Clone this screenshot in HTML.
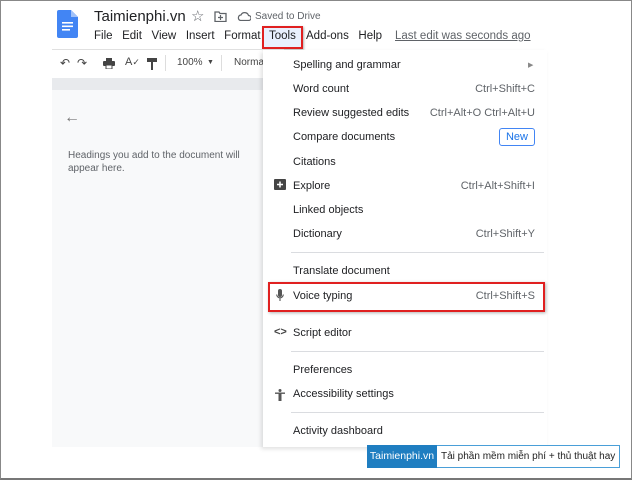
<!DOCTYPE html>
<html><head><meta charset="utf-8"><style>
*{margin:0;padding:0;box-sizing:border-box}
body{width:632px;height:480px;overflow:hidden;background:#fff;font-family:"Liberation Sans",Arial,sans-serif;position:relative;color:#202124}
.a{position:absolute;white-space:nowrap}
.mi{position:absolute;left:293px;font-size:11px;color:#202124;margin-top:1px}
.sc{position:absolute;right:97px;font-size:11px;color:#5f6368;margin-top:1px}
.hr{position:absolute;left:291px;width:253px;height:1px;background:#dadce0}
</style></head><body>
<div class="a" style="left:0;top:0;width:632px;height:480px;border:1px solid #888;border-bottom:2px solid #777"></div>
<svg class="a" style="left:57px;top:10px" width="21" height="28" viewBox="0 0 21 28"><path d="M2 0h12l7 7v19a2 2 0 0 1-2 2H2a2 2 0 0 1-2-2V2a2 2 0 0 1 2-2z" fill="#4285f4"/><path d="M14 0v7h7z" fill="#a1c2fa"/><rect x="5" y="12" width="11" height="1.6" fill="#fff"/><rect x="5" y="15.5" width="11" height="1.6" fill="#fff"/><rect x="5" y="19" width="8" height="1.6" fill="#fff"/></svg>
<div class="a" style="left:94px;top:8px;font-size:15px">Taimienphi.vn</div>
<div class="a" style="left:191px;top:7px;font-size:15px;color:#5f6368">☆</div>
<svg class="a" style="left:214px;top:11px" width="13" height="11"><path d="M1 1h4l1 1.5h6v8H1z" fill="none" stroke="#5f6368" stroke-width="1.3"/><path d="M6.5 4v5M4 6.5h5" stroke="#5f6368" stroke-width="1.2"/></svg>
<svg class="a" style="left:237px;top:12px" width="14" height="9"><path d="M3.5 8.5h8a2.5 2.5 0 0 0 0-5 4 4 0 0 0-7.5-.5A2.8 2.8 0 0 0 3.5 8.5z" fill="none" stroke="#5f6368" stroke-width="1.2"/></svg>
<div class="a" style="left:255px;top:11px;font-size:10px;color:#5f6368">Saved to Drive</div>
<div class="a" style="left:94px;top:30px;font-size:11.5px">File&nbsp;&nbsp;&nbsp;Edit&nbsp;&nbsp;&nbsp;View&nbsp;&nbsp;&nbsp;Insert&nbsp;&nbsp;&nbsp;Format</div>
<div class="a" style="left:264px;top:28px;width:38px;height:19px;background:#e8f0fe"></div>
<div class="a" style="left:269px;top:30px;font-size:11.5px">Tools</div>
<div class="a" style="left:262px;top:26px;width:41px;height:23px;border:2px solid #e02020;box-shadow:1px 1px 2px rgba(0,0,0,.3)"></div>
<div class="a" style="left:306px;top:30px;font-size:11.5px">Add-ons&nbsp;&nbsp;&nbsp;Help</div>
<div class="a" style="left:395px;top:30px;font-size:11.5px;color:#5f6368;text-decoration:underline">Last edit was seconds ago</div>
<div class="a" style="left:52px;top:49px;width:232px;height:1px;background:#e0e0e0"></div>
<div class="a" style="left:60px;top:56px;font-size:12px;color:#444;letter-spacing:7px">↶↷</div>
<svg class="a" style="left:103px;top:58px" width="12" height="11"><rect x="3" y="0" width="6" height="3" fill="#444"/><rect x="0" y="3" width="12" height="5" rx="1" fill="#444"/><rect x="3" y="7" width="6" height="4" fill="#fff" stroke="#444"/></svg>
<div class="a" style="left:125px;top:56px;font-size:11px;color:#444">A<span style="font-size:9px">✓</span></div>
<svg class="a" style="left:147px;top:58px" width="10" height="12"><path d="M0 0h10v4H0zM4 4h2v8H4z" fill="#444"/></svg>
<div class="a" style="left:165px;top:55px;width:1px;height:16px;background:#ddd"></div>
<div class="a" style="left:177px;top:57px;font-size:10px;color:#444">100%</div>
<div class="a" style="left:207px;top:59px;font-size:7px;color:#444">▼</div>
<div class="a" style="left:221px;top:55px;width:1px;height:16px;background:#ddd"></div>
<div class="a" style="left:234px;top:57px;font-size:10px;color:#444">Normal</div>
<div class="a" style="left:52px;top:78px;width:211px;height:12px;background:#e8eaed"></div>
<div class="a" style="left:52px;top:90px;width:211px;height:357px;background:#f8f9fa"></div>
<div class="a" style="left:64px;top:109px;font-size:16px;color:#777">←</div>
<div class="a" style="left:68px;top:149px;font-size:10px;color:#5f6368;line-height:13px">Headings you add to the document will<br>appear here.</div>
<div class="a" style="left:263px;top:50px;width:284px;height:397px;background:#fff;box-shadow:-2px 2px 4px rgba(0,0,0,.12)"></div>
<div class="mi" style="top:58px">Spelling and grammar</div><div class="a" style="left:528px;top:61px;font-size:7px;color:#888">▶</div>
<div class="mi" style="top:82px">Word count</div><div class="sc" style="top:82px">Ctrl+Shift+C</div>
<div class="mi" style="top:106px">Review suggested edits</div><div class="sc" style="top:106px">Ctrl+Alt+O Ctrl+Alt+U</div>
<div class="mi" style="top:130px">Compare documents</div>
<div class="a" style="left:499px;top:128px;width:36px;height:18px;border:1px solid #4285f4;border-radius:3px;color:#1a73e8;font-size:11px;text-align:center;line-height:16px">New</div>
<div class="mi" style="top:155px">Citations</div>
<svg class="a" style="left:274px;top:179px" width="12" height="12"><rect width="12" height="11" rx="1" fill="#444"/><path d="M6 2.5v6M3 5.5h6" stroke="#fff" stroke-width="1.5"/></svg>
<div class="mi" style="top:179px">Explore</div><div class="sc" style="top:179px">Ctrl+Alt+Shift+I</div>
<div class="mi" style="top:203px">Linked objects</div>
<div class="mi" style="top:227px">Dictionary</div><div class="sc" style="top:227px">Ctrl+Shift+Y</div>
<div class="hr" style="top:252px"></div>
<div class="mi" style="top:264px">Translate document</div>
<svg class="a" style="left:276px;top:289px" width="8" height="13"><rect x="2" y="0" width="4" height="8" rx="2" fill="#555"/><path d="M0.7 5.5a3.3 3.3 0 0 0 6.6 0M4 9v3" fill="none" stroke="#555" stroke-width="1.1"/></svg>
<div class="mi" style="top:289px">Voice typing</div><div class="sc" style="top:289px">Ctrl+Shift+S</div>
<div class="a" style="left:268px;top:282px;width:277px;height:30px;border:2px solid #e02020;box-shadow:1px 1px 3px rgba(0,0,0,.3)"></div>
<div class="a" style="left:274px;top:326px;font-size:11px;color:#444;font-weight:bold">&lt;&gt;</div>
<div class="mi" style="top:326px">Script editor</div>
<div class="hr" style="top:351px"></div>
<div class="mi" style="top:363px">Preferences</div>
<svg class="a" style="left:275px;top:389px" width="10" height="12"><circle cx="5" cy="1.5" r="1.5" fill="#555"/><path d="M0 3.5h10v1.4H6.5V12H3.5V4.9H0z" fill="#555"/></svg>
<div class="mi" style="top:387px">Accessibility settings</div>
<div class="hr" style="top:412px"></div>
<div class="mi" style="top:424px">Activity dashboard</div>
<div class="a" style="left:367px;top:445px;width:253px;height:23px;border:1px solid #4a9fd8;background:#fff"></div>
<div class="a" style="left:367px;top:445px;width:70px;height:23px;background:#1f7ec1;color:#fff;font-size:10.5px;line-height:23px;text-align:center">Taimienphi.vn</div>
<div class="a" style="left:441px;top:445px;font-size:10px;line-height:23px;color:#222">Tải phần mềm miễn phí + thủ thuật hay</div>
</body></html>
